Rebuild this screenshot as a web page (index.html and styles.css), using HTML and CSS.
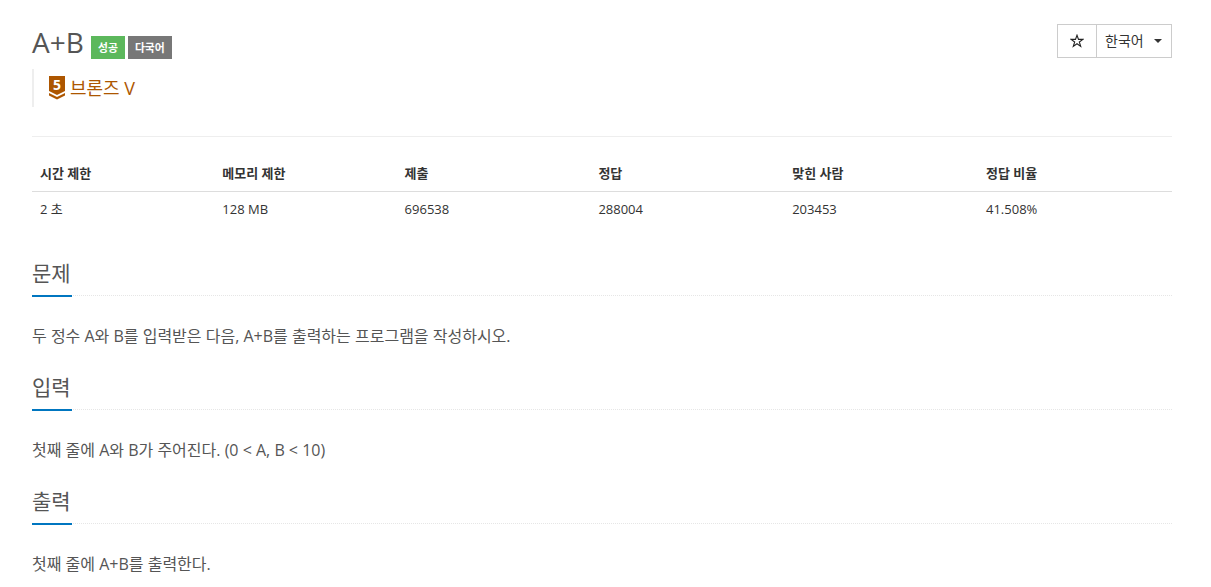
FILE: index.html
```html
<!DOCTYPE html>
<html lang="ko">
<head>
<meta charset="utf-8">
<title>A+B</title>
<link rel="stylesheet" href="styles.css">
</head>
<body>
<main class="page">
  <header class="head">
    <div class="title-wrap">
      <div class="title-row">
        <h1 class="title">A+B</h1>
        <span class="label label-green">성공</span>
        <span class="label label-gray">다국어</span>
      </div>
      <div class="tier">
        <svg class="tier-icon" viewBox="0 0 16 24" width="16" height="24" aria-hidden="true">
          <path d="M0 0H16V15L8 19L0 15Z" fill="#ad5600"/>
          <path d="M0 17L8 21L16 17V19.5L8 23.5L0 19.5Z" fill="#ad5600"/>
          <text x="8" y="14" class="tier-num">5</text>
        </svg>
        <span class="tier-text">브론즈 V</span>
      </div>
    </div>
    <div class="btn-group">
      <button class="btn btn-star" type="button" aria-label="즐겨찾기">
        <svg viewBox="0 0 14 14" width="14" height="14" aria-hidden="true">
          <path d="M7 1.2L8.5 5.4H12.9L9.3 8L10.7 12.4L7 9.7L3.3 12.4L4.7 8L1.1 5.4H5.5Z" fill="none" stroke="#222" stroke-width="1.1" stroke-linejoin="miter"/>
        </svg>
      </button>
      <button class="btn btn-lang" type="button">한국어<span class="caret"></span></button>
    </div>
  </header>

  <table class="info">
    <thead>
      <tr><th class="c1">시간 제한</th><th class="c2">메모리 제한</th><th class="c3">제출</th><th class="c3">정답</th><th class="c3">맞힌 사람</th><th>정답 비율</th></tr>
    </thead>
    <tbody>
      <tr><td>2 초</td><td>128 MB</td><td>696538</td><td>288004</td><td>203453</td><td>41.508%</td></tr>
    </tbody>
  </table>

  <section class="sec sec-first">
    <h2 class="sec-title"><span>문제</span></h2>
    <p class="sec-body">두 정수 A와 B를 입력받은 다음, A+B를 출력하는 프로그램을 작성하시오.</p>
  </section>
  <section class="sec">
    <h2 class="sec-title"><span>입력</span></h2>
    <p class="sec-body">첫째 줄에 A와 B가 주어진다. (0 &lt; A, B &lt; 10)</p>
  </section>
  <section class="sec">
    <h2 class="sec-title"><span>출력</span></h2>
    <p class="sec-body">첫째 줄에 A+B를 출력한다.</p>
  </section>
</main>
</body>
</html>
```
FILE: styles.css
```css
* { box-sizing: border-box; }
html, body { margin: 0; padding: 0; background: #fff; height: 100%; overflow: hidden; }
body {
  font-family: "Open Sans", "Noto Sans CJK KR", sans-serif;
  font-size: 14px;
  line-height: 20px;
  color: #333;
}
.page { padding: 0 39px 0 32px; }

.head {
  display: flex;
  justify-content: space-between;
  align-items: flex-start;
  height: 137px;
  padding-top: 24px;
  border-bottom: 1px solid #eee;
}
.title-row { display: flex; align-items: flex-end; height: 35px; }
.title {
  width: 59px;
  margin: 0;
  font-size: 28px;
  line-height: 38px;
  font-weight: 400;
  color: #555;
  height: 36px;
}
.label {
  height: 23px;
  padding: 0 7px;
  margin-right: 3px;
  font-size: 10.8px;
  line-height: 23px;
  font-weight: 700;
  color: #fff;
}
.label-green { background: #5cb85c; }
.label-gray { background: #777; }

.tier {
  display: flex;
  align-items: center;
  gap: 5px;
  height: 38px;
  margin-top: 10px;
  padding-left: 15px;
  border-left: 2px solid #eee;
}
.tier-icon { display: block; }
.tier-num { font: 700 14px "Open Sans", sans-serif; fill: #fff; text-anchor: middle; }
.tier-text { font-size: 18px; font-weight: 400; color: #ad5600; line-height: 24px; }

.btn-group { display: flex; }
.btn {
  height: 34px;
  background: #fff;
  border: 1px solid #ccc;
  font: inherit;
  font-size: 14px;
  color: #333;
  padding: 0;
}
.btn-star { width: 40px; display: flex; align-items: center; justify-content: center; }
.btn-lang { width: 76px; margin-left: -1px; display: flex; align-items: center; padding-left: 8px; }
.caret {
  width: 0; height: 0;
  margin-left: 10px;
  border-top: 4px solid #333;
  border-left: 4px solid transparent;
  border-right: 4px solid transparent;
}

.info {
  width: 100%;
  margin-top: 19px;
  border-collapse: collapse;
  table-layout: fixed;
  font-size: 13px;
}
.info th {
  height: 35px;
  padding: 0 8px;
  text-align: left;
  font-weight: 700;
  border-bottom: 1px solid #ddd;
}
.info td { height: 36px; padding: 0 8px; }
.c1, .c2 { width: 182.3px; }
.c3 { width: 193.8px; }

.sec-first { margin-top: 29px; }
.sec { height: 114px; }
.sec-title {
  margin: 0;
  height: 40px;
  font-size: 21px;
  line-height: 35px;
  font-weight: 400;
  color: #555;
  border-bottom: 1px dotted #e6e6e6;
}
.sec-title span {
  display: inline-block;
  height: 41px;
  width: 40px;
  white-space: nowrap;
  border-bottom: 2px solid #0076c0;
}
.sec-body { margin: 0; padding-top: 30px; font-size: 16px; line-height: 20px; color: #555; }
```
